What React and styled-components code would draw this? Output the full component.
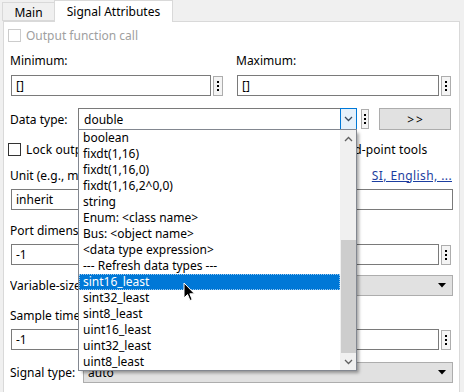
import React from 'react';
import styled, { createGlobalStyle } from 'styled-components';

const GlobalStyle = createGlobalStyle`
  html, body { margin: 0; padding: 0; background: #f0f0f0; }
  body {
    font-family: "Noto Sans", "Open Sans", sans-serif;
    font-size: 12px;
    color: #000;
  }
  * { box-sizing: border-box; }
`;

const Window = styled.div`
  position: relative;
  width: 464px;
  height: 392px;
  overflow: hidden;
  background: #f0f0f0;
`;

const TabBar = styled.div`
  display: flex;
  align-items: flex-end;
  height: 21px;
  padding-left: 2px;
  position: relative;
  z-index: 1;
`;

const Tab = styled.div`
  width: ${p => p.$w}px;
  height: ${p => (p.$active ? 22 : 19)}px;
  margin-bottom: ${p => (p.$active ? -1 : 0)}px;
  display: flex;
  align-items: center;
  justify-content: center;
  background: ${p => (p.$active ? '#fff' : '#f0f0f0')};
  border: 1px solid #d9d9d9;
  border-bottom: ${p => (p.$active ? 'none' : '1px solid #d9d9d9')};
  border-right: ${p => (p.$active ? '1px solid #d9d9d9' : 'none')};
  padding-top: ${p => (p.$active ? 0 : 1)}px;
  white-space: nowrap;
`;

const Panel = styled.div`
  margin-left: 3px;
  width: 457px;
  height: 380px;
  background: #fff;
  border: 1px solid #d9d9d9;
  padding: 0 6px 0 4px;
  display: flex;
  flex-direction: column;
`;

const CheckRow = styled.label`
  display: flex;
  align-items: center;
  gap: 5px;
  height: 16px;
  margin-top: ${p => p.$mt}px;
  white-space: nowrap;
  letter-spacing: ${p => p.$ls || 0}px;
  color: ${p => (p.$disabled ? '#a0a0a0' : '#000')};
`;

const CheckBox = styled.span`
  width: 13px;
  height: 13px;
  flex: none;
  border: 1px solid ${p => (p.$disabled ? '#cccccc' : '#333333')};
  background: #fff;
`;

const Label = styled.div`
  height: 16px;
  line-height: 16px;
  margin-left: 2px;
  white-space: nowrap;
`;

const PairRow = styled.div`
  display: grid;
  grid-template-columns: 212px 214px;
  column-gap: 14px;
  margin-top: 10px;
  margin-left: 3px;
`;

const Field = styled.div`
  display: flex;
  flex-direction: column;
  gap: 6px;
  & > ${Label} { margin-left: -1px; }
`;

const InputRow = styled.div`
  display: flex;
  gap: 2px;
  margin-top: ${p => p.$mt || 0}px;
  margin-left: ${p => p.$ml || 0}px;
  margin-right: ${p => p.$mr || 0}px;
`;

const TextBox = styled.div`
  flex: 1;
  height: ${p => p.$h || 21}px;
  border: 1px solid #7a7a7a;
  background: #fff;
  padding-left: 4px;
  display: flex;
  align-items: center;
  white-space: nowrap;
`;

const DotsBtn = styled.div`
  width: ${p => p.$w || 10}px;
  height: 20px;
  align-self: center;
  border: 1px solid #adadad;
  background: #f4f4f4;
  display: flex;
  flex-direction: column;
  align-items: center;
  justify-content: center;
  gap: 2px;
  & > i {
    display: block;
    width: 2px;
    height: 2px;
    background: #000;
  }
`;

const Dots = ({ w }) => (
  <DotsBtn $w={w}>
    <i />
    <i />
    <i />
  </DotsBtn>
);

const LineRow = styled.div`
  display: flex;
  align-items: center;
  height: ${p => p.$h}px;
  margin-top: ${p => p.$mt}px;
  white-space: nowrap;
`;

const InlineLabel = styled.div`
  margin-left: 2px;
  width: ${p => p.$w}px;
  flex: none;
  white-space: nowrap;
  overflow: hidden;
`;

const Combo = styled.div`
  width: 279px;
  height: 22px;
  border: 1px solid #7a7a7a;
  background: #fff;
  display: flex;
  align-items: stretch;
`;

const ComboText = styled.div`
  flex: 1;
  padding-left: 5px;
  display: flex;
  align-items: center;
`;

const ComboArrow = styled.div`
  width: 17px;
  margin: -1px -1px -1px 0;
  border: 1px solid #0078d7;
  background: #e5f1fb;
  display: flex;
  align-items: center;
  justify-content: center;
`;

const PushButton = styled.div`
  width: 72px;
  height: 22px;
  margin-left: 10px;
  border: 1px solid #adadad;
  background: #e1e1e1;
  display: flex;
  align-items: center;
  justify-content: center;
  letter-spacing: 2px;
  padding-left: 2px;
`;

const GrayCombo = styled.div`
  flex: 1;
  height: 21px;
  border: 1px solid #adadad;
  background: #e1e1e1;
  display: flex;
  align-items: center;
  padding: 0 6px 0 4px;
  justify-content: space-between;
`;

const LinkText = styled.span`
  margin-left: auto;
  margin-right: 1px;
  color: #1c3ea0;
  letter-spacing: 0.4px;
  text-decoration: underline;
`;

const DropList = styled.div`
  position: absolute;
  left: 78px;
  top: 129px;
  width: 279px;
  height: 242px;
  border: 1px solid #828790;
  background: #fff;
  display: flex;
  box-shadow: 3px 3px 3px -1px rgba(0, 0, 0, 0.35);
  z-index: 5;
`;

const Items = styled.div`
  flex: 1;
  display: flex;
  flex-direction: column;
  overflow: hidden;
`;

const Item = styled.div`
  height: 16px;
  line-height: 16px;
  padding-left: 4px;
  white-space: nowrap;
  background: ${p => (p.$sel ? '#0078d7' : 'transparent')};
  color: ${p => (p.$sel ? '#fff' : '#000')};
  outline: ${p => (p.$sel ? '1px dotted #9cc8ee' : 'none')};
  outline-offset: -1px;
`;

const ScrollBar = styled.div`
  width: 16px;
  background: #f0f0f0;
  display: flex;
  flex-direction: column;
`;

const ScrollBtn = styled.div`
  height: 17px;
  display: flex;
  align-items: center;
  justify-content: center;
`;

const ScrollSpace = styled.div`
  flex: 1;
`;

const Thumb = styled.div`
  height: 113px;
  margin: 0 0 0 1px;
  background: #cdcdcd;
`;

const Cursor = styled.svg`
  position: absolute;
  left: 183px;
  top: 282px;
  z-index: 10;
`;

const Chevron = ({ up, color = '#606060' }) => (
  <svg width="9" height="6" viewBox="0 0 9 6">
    <path
      d={up ? 'M1 5 L4.5 1.5 L8 5' : 'M1 1 L4.5 4.5 L8 1'}
      fill="none"
      stroke={color}
      strokeWidth="1.3"
    />
  </svg>
);

const DownTri = () => (
  <svg width="8" height="5" viewBox="0 0 8 5">
    <path d="M0 0 H8 L4 4.5 Z" fill="#000" />
  </svg>
);

const items = [
  'boolean',
  'fixdt(1,16)',
  'fixdt(1,16,0)',
  'fixdt(1,16,2^0,0)',
  'string',
  'Enum: <class name>',
  'Bus: <object name>',
  '<data type expression>',
  '--- Refresh data types ---',
  'sint16_least',
  'sint32_least',
  'sint8_least',
  'uint16_least',
  'uint32_least',
  'uint8_least',
];

export default function App() {
  return (
    <Window>
      <GlobalStyle />
      <TabBar>
        <Tab $w={52}>Main</Tab>
        <Tab $w={119} $active>
          Signal Attributes
        </Tab>
      </TabBar>
      <Panel>
        <CheckRow $mt={5} $disabled>
          <CheckBox $disabled />
          Output function call
        </CheckRow>

        <PairRow>
          <Field>
            <Label>Minimum:</Label>
            <InputRow>
              <TextBox>[]</TextBox>
              <Dots />
            </InputRow>
          </Field>
          <Field>
            <Label>Maximum:</Label>
            <InputRow>
              <TextBox>[]</TextBox>
              <Dots />
            </InputRow>
          </Field>
        </PairRow>

        <LineRow $h={22} $mt={12}>
          <InlineLabel $w={68}>Data type:</InlineLabel>
          <Combo>
            <ComboText>double</ComboText>
            <ComboArrow>
              <Chevron color="#3b4a5a" />
            </ComboArrow>
          </Combo>
          <InputRow $ml={4}>
            <Dots w={8} />
          </InputRow>
          <PushButton>&gt;&gt;</PushButton>
        </LineRow>

        <CheckRow $mt={11} $ls={0.12}>
          <CheckBox />
          Lock output data type setting against changes by the fixed-point tools
        </CheckRow>

        <LineRow $h={16} $mt={10}>
          <InlineLabel $w={200}>Unit (e.g., m, m/s^2, N*m):</InlineLabel>
          <LinkText>SI, English, ...</LinkText>
        </LineRow>

        <InputRow $mt={6} $ml={3}>
          <TextBox $h={21}>inherit</TextBox>
        </InputRow>

        <LineRow $h={16} $mt={12}>
          <InlineLabel $w={300}>Port dimensions (-1 for inherited):</InlineLabel>
        </LineRow>

        <InputRow $mt={6} $ml={3} $mr={2}>
          <TextBox>-1</TextBox>
          <Dots />
        </InputRow>

        <LineRow $h={21} $mt={10}>
          <InlineLabel $w={120}>Variable-size signal:</InlineLabel>
          <GrayCombo>
            <span>Inherit</span>
            <DownTri />
          </GrayCombo>
        </LineRow>

        <LineRow $h={16} $mt={11}>
          <InlineLabel $w={300}>Sample time (-1 for inherited):</InlineLabel>
        </LineRow>

        <InputRow $mt={6} $ml={3} $mr={2}>
          <TextBox>-1</TextBox>
          <Dots />
        </InputRow>

        <LineRow $h={21} $mt={12}>
          <InlineLabel $w={73}>Signal type:</InlineLabel>
          <GrayCombo>
            <span>auto</span>
            <DownTri />
          </GrayCombo>
        </LineRow>
      </Panel>

      <DropList>
        <Items>
          {items.map(t => (
            <Item key={t} $sel={t === 'sint16_least'}>
              {t}
            </Item>
          ))}
        </Items>
        <ScrollBar>
          <ScrollBtn>
            <Chevron up />
          </ScrollBtn>
          <ScrollSpace />
          <Thumb />
          <ScrollBtn>
            <Chevron />
          </ScrollBtn>
        </ScrollBar>
      </DropList>

      <Cursor width="13" height="20" viewBox="0 0 13 20">
        <path
          d="M1 1 L1 16 L4.5 12.5 L7 18.5 L9.2 17.6 L6.8 11.8 L11.5 11.8 Z"
          fill="#000"
          stroke="#fff"
          strokeWidth="1"
          strokeLinejoin="round"
        />
      </Cursor>
    </Window>
  );
}
